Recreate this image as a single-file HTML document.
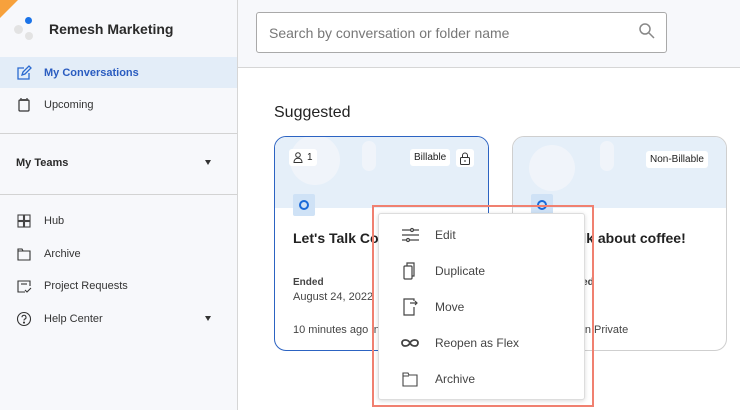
<!DOCTYPE html>
<html><head><style>
*{box-sizing:border-box;margin:0;padding:0}
body{width:740px;height:410px;overflow:hidden;font-family:"Liberation Sans",sans-serif;background:#fff;position:relative;color:#222}
.abs{position:absolute}
.side{left:0;top:0;width:238px;height:410px;background:#f7f8fb;border-right:1px solid #d6d6d6}
.item{position:absolute;left:0;width:237px;height:31px;font-size:11px;color:#333;display:flex;align-items:center;padding-left:44px}
.item svg{position:absolute;left:16px;top:8px}
.hr{position:absolute;left:0;width:237px;height:1px;background:#d3d3d3}
.card{position:absolute;top:136px;width:215px;height:215px;border-radius:12px;overflow:hidden;background:#fff}
.hd{position:absolute;left:0;top:0;width:100%;height:71px;background:#e5eff9}
.tag{position:absolute;background:#fff;border-radius:3px;font-size:10px;color:#222;padding:3px 4px}
.mi{position:absolute;left:0;width:207px;height:36px;font-size:12px;color:#444;padding-left:56px;display:flex;align-items:center}
.mi svg{position:absolute;left:22px}
</style></head><body>
<div class="abs side"></div>
<div class="abs" style="left:0;top:0;width:0;height:0;border-top:18px solid #f7a13c;border-right:18px solid transparent"></div>
<div class="abs" style="left:14px;top:25px;width:9px;height:9px;border-radius:50%;background:#e3e3e3"></div>
<div class="abs" style="left:25px;top:17px;width:7px;height:7px;border-radius:50%;background:#1a73e8"></div>
<div class="abs" style="left:25px;top:32px;width:8px;height:8px;border-radius:50%;background:#e3e3e3"></div>
<div class="abs" style="left:49px;top:21px;font-size:14px;font-weight:bold;color:#2a2a2a">Remesh Marketing</div>
<div class="item" style="top:57px;background:#e3edf8;color:#2a5cc0;font-weight:bold"><svg width="16" height="16" viewBox="0 0 16 16" fill="none" stroke="#2a6ad0" stroke-width="1.3"><path d="M8 3H2v11h11V8"/><path d="M6 10l1-3 6-6 2 2-6 6z"/></svg>My Conversations</div>
<div class="item" style="top:89px"><svg width="16" height="16" viewBox="0 0 16 16" fill="none" stroke="#333" stroke-width="1.2"><rect x="3" y="3" width="10" height="11" rx="1"/><path d="M5 1v3M11 1v3M7 2v2M9 2v2"/></svg>Upcoming</div>
<div class="hr" style="top:133px"></div>
<div class="abs" style="left:16px;top:157px;font-size:11px;font-weight:bold;color:#2a2a2a">My Teams</div>
<div class="abs" style="left:205px;top:160px;border-top:5px solid #333;border-left:3px solid transparent;border-right:3px solid transparent"></div>
<div class="hr" style="top:194px"></div>
<div class="item" style="top:205px"><svg width="16" height="16" viewBox="0 0 16 16" fill="none" stroke="#444" stroke-width="1.1"><rect x="2" y="2" width="5.5" height="5.5"/><rect x="8.5" y="2" width="5.5" height="5.5"/><rect x="2" y="8.5" width="5.5" height="5.5"/><rect x="8.5" y="8.5" width="5.5" height="5.5"/></svg>Hub</div>
<div class="item" style="top:238px"><svg width="16" height="16" viewBox="0 0 16 16" fill="none" stroke="#333" stroke-width="1.1"><path d="M2 3h4l1 2h7v9H2z M2 5h5"/></svg>Archive</div>
<div class="item" style="top:270px"><svg width="16" height="16" viewBox="0 0 16 16" fill="none" stroke="#333" stroke-width="1.1"><path d="M14 8V3H2v11h7"/><path d="M9 12l2 2 4-4"/><path d="M5 6h6"/></svg>Project Requests</div>
<div class="item" style="top:303px"><svg width="16" height="16" viewBox="0 0 16 16" fill="none" stroke="#333" stroke-width="1.1"><circle cx="8" cy="8" r="6.5"/><path d="M6 6.3a2 2 0 1 1 2.5 1.9c-.5.2-.5.6-.5 1.3"/><circle cx="8" cy="11.6" r=".5" fill="#333"/></svg>Help Center</div>
<div class="abs" style="left:205px;top:316px;border-top:5px solid #333;border-left:3px solid transparent;border-right:3px solid transparent"></div>

<div class="abs" style="left:238px;top:0;width:502px;height:68px;background:#f7f8fb;border-bottom:1px solid #d6d6d6"></div>
<div class="abs" style="left:256px;top:12px;width:411px;height:41px;background:#fff;border:1px solid #a9a9a9;border-radius:3px;font-size:14px;color:#777;padding:12px 0 0 12px">Search by conversation or folder name</div>
<svg class="abs" style="left:638px;top:22px" width="18" height="18" viewBox="0 0 18 18" fill="none" stroke="#888" stroke-width="1.5"><circle cx="7" cy="7" r="5"/><path d="M11 11l5 5"/></svg>
<div class="abs" style="left:274px;top:104px;font-size:16px;color:#222">Suggested</div>

<div class="card" style="left:274px;border:1px solid #2c63c2">
<div class="hd"><div class="abs" style="left:15px;top:-2px;width:50px;height:50px;border-radius:50%;background:#f0f4fa"></div><div class="abs" style="left:87px;top:4px;width:14px;height:30px;border-radius:7px;background:#f0f4fa"></div></div>
<div class="tag" style="left:14px;top:12px;display:flex;align-items:center;gap:4px"><svg width="10" height="11" viewBox="0 0 10 11" fill="none" stroke="#333" stroke-width="1"><circle cx="5" cy="3" r="2.3"/><path d="M1 10.5c0-3 1.8-4.3 4-4.3s4 1.3 4 4.3z"/></svg>1</div>
<div class="tag" style="left:135px;top:12px">Billable</div>
<div class="tag" style="left:181px;top:12px;width:18px;height:18px;padding:3px"><svg width="12" height="13" viewBox="0 0 12 13" fill="none" stroke="#333" stroke-width="1"><rect x="1.5" y="5.5" width="9" height="7" rx="1"/><path d="M3.5 5.5V3.5a2.5 2.5 0 0 1 5 0v2"/><path d="M6 8v2"/></svg></div>
<div class="abs" style="left:18px;top:57px;width:22px;height:22px;background:#cfe2f6;border-radius:2px"><div class="abs" style="left:6px;top:6px;width:10px;height:10px;border:2px solid #1a6ad8;border-radius:50%"></div></div>
<div class="abs" style="left:18px;top:93px;font-size:14px;font-weight:bold;color:#222;white-space:nowrap">Let's Talk Coffee</div>
<div class="abs" style="left:18px;top:140px;font-size:10px;font-weight:bold;color:#444">Ended</div>
<div class="abs" style="left:18px;top:154px;font-size:11px;color:#444">August 24, 2022</div>
<div class="abs" style="left:18px;top:187px;font-size:11px;color:#444;white-space:nowrap">10 minutes ago in Private</div>
</div>
<div class="card" style="left:512px;border:1px solid #cfcfcf">
<div class="hd"><div class="abs" style="left:16px;top:8px;width:46px;height:46px;border-radius:50%;background:#f0f4fa"></div><div class="abs" style="left:87px;top:4px;width:14px;height:30px;border-radius:7px;background:#f0f4fa"></div></div>
<div class="tag" style="left:133px;top:14px">Non-Billable</div>
<div class="abs" style="left:18px;top:57px;width:22px;height:22px;background:#cfe2f6;border-radius:2px"><div class="abs" style="left:6px;top:6px;width:10px;height:10px;border:2px solid #1a6ad8;border-radius:50%"></div></div>
<div class="abs" style="left:18px;top:93px;font-size:14px;font-weight:bold;color:#222;white-space:nowrap">Let's Talk about coffee!</div>
<div class="abs" style="left:18px;top:140px;font-size:10px;font-weight:bold;color:#444">Unscheduled</div>
<div class="abs" style="left:18px;top:187px;font-size:11px;color:#444;white-space:nowrap">1 day ago in Private</div>
</div>

<div class="abs" style="left:372px;top:205px;width:222px;height:202px;border:2px solid #f08070"></div>
<div class="abs" style="left:378px;top:213px;width:207px;height:187px;background:#fff;border:1px solid #ddd;border-radius:3px;box-shadow:0 1px 4px rgba(0,0,0,.15)">
<div class="mi" style="top:3px"><svg width="18" height="16" viewBox="0 0 18 16" fill="none" stroke="#444" stroke-width="1.2"><path d="M1 3h17M1 8h17M1 13h17"/><circle cx="11" cy="3" r="1.5" fill="#fff"/><circle cx="7" cy="13" r="1.5" fill="#fff"/></svg>Edit</div>
<div class="mi" style="top:39px"><svg width="18" height="18" viewBox="0 0 18 18" fill="none" stroke="#444" stroke-width="1.2"><rect x="3" y="4" width="8" height="13" rx="1"/><path d="M6 4V1h7v13h-2"/></svg>Duplicate</div>
<div class="mi" style="top:75px"><svg width="18" height="18" viewBox="0 0 18 18" fill="none" stroke="#444" stroke-width="1.2"><path d="M13 9v8H3V1h10v2"/><path d="M9 5h7M14 3l2 2-2 2"/></svg>Move</div>
<div class="mi" style="top:111px"><svg width="18" height="12" viewBox="0 0 18 12" fill="none" stroke="#444" stroke-width="1.8"><path d="M9 6c-2-4-8-4-8 0s6 4 8 0 8-4 8 0-6 4-8 0"/></svg>Reopen as Flex</div>
<div class="mi" style="top:147px"><svg width="18" height="16" viewBox="0 0 18 16" fill="none" stroke="#444" stroke-width="1.1"><path d="M2 2h5l1 2h8v11H2z M2 5h6"/></svg>Archive</div>
</div>
</body></html>
